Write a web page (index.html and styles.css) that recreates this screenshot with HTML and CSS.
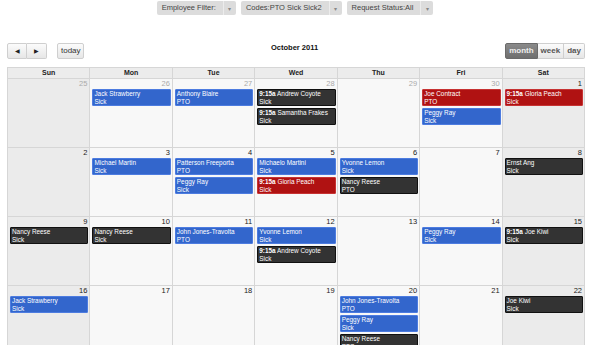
FILE: index.html
```html
<!DOCTYPE html>
<html lang="en">
<head>
	<meta charset="UTF-8">
	<title>Leave Calendar</title>
	<link rel="stylesheet" href="styles.css">
</head>
<body>
	<div class="filters">
		<div class="filter"><span class="label">Employee Filter:</span><span class="caret">&#9662;</span></div>
		<div class="filter"><span class="label">Codes:PTO Sick Sick2</span><span class="caret">&#9662;</span></div>
		<div class="filter"><span class="label">Request Status:All</span><span class="caret">&#9662;</span></div>
	</div>

	<div class="cal">
		<div class="toolbar">
			<div class="left">
				<div class="btn-group">
					<span class="btn arrow">&#9664;</span><span class="btn arrow">&#9654;</span>
				</div>
				<span class="btn today">today</span>
			</div>
			<h2 class="title">October 2011</h2>
			<div class="btn-group views">
				<span class="btn active">month</span><span class="btn">week</span><span class="btn">day</span>
			</div>
		</div>

		<div class="month">
			<div class="head">Sun</div>
			<div class="head">Mon</div>
			<div class="head">Tue</div>
			<div class="head">Wed</div>
			<div class="head">Thu</div>
			<div class="head">Fri</div>
			<div class="head">Sat</div>

			<!-- week 1 -->
			<div class="day weekend other"><div class="num">25</div></div>
			<div class="day other"><div class="num">26</div>
				<div class="ev blue">Jack Strawberry<br>Sick</div>
			</div>
			<div class="day other"><div class="num">27</div>
				<div class="ev blue">Anthony Blaire<br>PTO</div>
			</div>
			<div class="day other"><div class="num">28</div>
				<div class="ev dark"><b>9:15a</b> Andrew Coyote<br>Sick</div>
				<div class="ev dark"><b>9:15a</b> Samantha Frakes<br>Sick</div>
			</div>
			<div class="day other"><div class="num">29</div></div>
			<div class="day other"><div class="num">30</div>
				<div class="ev red">Joe Contract<br>PTO</div>
				<div class="ev blue">Peggy Ray<br>Sick</div>
			</div>
			<div class="day weekend"><div class="num">1</div>
				<div class="ev red"><b>9:15a</b> Gloria Peach<br>Sick</div>
			</div>

			<!-- week 2 -->
			<div class="day weekend"><div class="num">2</div></div>
			<div class="day"><div class="num">3</div>
				<div class="ev blue">Michael Martin<br>Sick</div>
			</div>
			<div class="day"><div class="num">4</div>
				<div class="ev blue">Patterson Freeporta<br>PTO</div>
				<div class="ev blue">Peggy Ray<br>Sick</div>
			</div>
			<div class="day"><div class="num">5</div>
				<div class="ev blue">Michaelo Martini<br>Sick</div>
				<div class="ev red"><b>9:15a</b> Gloria Peach<br>Sick</div>
			</div>
			<div class="day"><div class="num">6</div>
				<div class="ev blue">Yvonne Lemon<br>Sick</div>
				<div class="ev dark">Nancy Reese<br>PTO</div>
			</div>
			<div class="day"><div class="num">7</div></div>
			<div class="day weekend"><div class="num">8</div>
				<div class="ev dark">Ernst Ang<br>Sick</div>
			</div>

			<!-- week 3 -->
			<div class="day weekend"><div class="num">9</div>
				<div class="ev dark">Nancy Reese<br>Sick</div>
			</div>
			<div class="day"><div class="num">10</div>
				<div class="ev dark">Nancy Reese<br>Sick</div>
			</div>
			<div class="day"><div class="num">11</div>
				<div class="ev blue">John Jones-Travolta<br>PTO</div>
			</div>
			<div class="day"><div class="num">12</div>
				<div class="ev blue">Yvonne Lemon<br>Sick</div>
				<div class="ev dark"><b>9:15a</b> Andrew Coyote<br>Sick</div>
			</div>
			<div class="day"><div class="num">13</div></div>
			<div class="day"><div class="num">14</div>
				<div class="ev blue">Peggy Ray<br>Sick</div>
			</div>
			<div class="day weekend"><div class="num">15</div>
				<div class="ev dark"><b>9:15a</b> Joe Kiwi<br>Sick</div>
			</div>

			<!-- week 4 -->
			<div class="day weekend"><div class="num">16</div>
				<div class="ev blue">Jack Strawberry<br>Sick</div>
			</div>
			<div class="day"><div class="num">17</div></div>
			<div class="day"><div class="num">18</div></div>
			<div class="day"><div class="num">19</div></div>
			<div class="day"><div class="num">20</div>
				<div class="ev blue">John Jones-Travolta<br>PTO</div>
				<div class="ev blue">Peggy Ray<br>Sick</div>
				<div class="ev dark">Nancy Reese<br>PTO</div>
			</div>
			<div class="day"><div class="num">21</div></div>
			<div class="day weekend"><div class="num">22</div>
				<div class="ev dark">Joe Kiwi<br>Sick</div>
			</div>
		</div>
	</div>
</body>
</html>
```

FILE: styles.css
```css
*{
	margin: 0;
	padding: 0;
	box-sizing: border-box;
}

body{
	font-family: "Liberation Sans", Arial, sans-serif;
	color: #333;
	background: #fff;
	overflow: hidden;
}

/* filter dropdowns */
.filters{
	display: flex;
	justify-content: center;
	gap: 5px;
	padding-top: 1px;
	height: 15px;
}

.filter{
	display: flex;
	align-items: center;
	height: 14px;
	background: #dcdcdc;
	border-radius: 2px;
	font-size: 7.5px;
	color: #444;
}

.filter .label{
	padding: 0 7px 0 5px;
	line-height: 14px;
	border-right: 1px solid #ececec;
}

.filter .caret{
	width: 12px;
	text-align: center;
	font-size: 6px;
	color: #888;
}

/* calendar */
.cal{
	width: 578px;
	margin-left: 7px;
}

.toolbar{
	display: flex;
	justify-content: space-between;
	align-items: flex-start;
	margin-top: 28px;
	height: 16px;
	margin-bottom: 8px;
}

.left{
	display: flex;
	gap: 10px;
}

.btn-group{
	display: flex;
}

.btn{
	display: inline-block;
	height: 16px;
	line-height: 14px;
	padding: 0 3px;
	font-size: 8px;
	color: #333;
	background: linear-gradient(#fbfbfb, #e6e6e6);
	border: 1px solid #cfcfcf;
	border-radius: 2px;
}

.btn-group .btn{
	border-radius: 0;
}

.btn-group .btn:first-child{
	border-radius: 2px 0 0 2px;
}

.btn-group .btn:last-child{
	border-radius: 0 2px 2px 0;
	border-left: 0;
}

.arrow{
	width: 20px;
	text-align: center;
	font-size: 6px;
	color: #222;
}

.today{
	width: 27px;
	text-align: center;
}

.title{
	font-size: 7.5px;
	font-weight: bold;
	color: #111;
	line-height: 10px;
}

.views .btn{
	font-weight: bold;
	color: #555;
	padding: 0 3px;
}

.views .btn:nth-child(2){
	border-left: 0;
}

.views .active{
	background: linear-gradient(#8a8a8a, #6f6f6f);
	border-color: #6a6a6a;
	color: #eee;
}

.month{
	display: grid;
	grid-template-columns: repeat(7, 1fr);
	grid-template-rows: 10px repeat(4, 68px);
	gap: 1px;
	background: #d6d6d6;
	border: 1px solid #d6d6d6;
}

.head{
	background: #ececec;
	font-size: 7px;
	font-weight: bold;
	line-height: 10px;
	text-align: center;
	color: #222;
}

.day{
	background: #f8f8f8;
	overflow: hidden;
}

.day.weekend{
	background: #ebebeb;
}

.num{
	height: 10px;
	padding-right: 2px;
	text-align: right;
	font-size: 7.5px;
	line-height: 10px;
	color: #222;
}

.other .num{
	color: #aaa;
}

.ev{
	height: 17px;
	margin: 0 1px 2px 2px;
	padding: 0 1px;
	border: 1px solid;
	border-radius: 1px;
	font-size: 6.4px;
	line-height: 7.5px;
	color: #fff;
	white-space: nowrap;
	overflow: hidden;
}

.ev b{
	font-weight: bold;
}

.blue{
	background: #3366cc;
	border-color: #4d7ce0;
}

.dark{
	background: #333;
	border-color: #111;
}

.red{
	background: #b01212;
	border-color: #c73333;
}
```
